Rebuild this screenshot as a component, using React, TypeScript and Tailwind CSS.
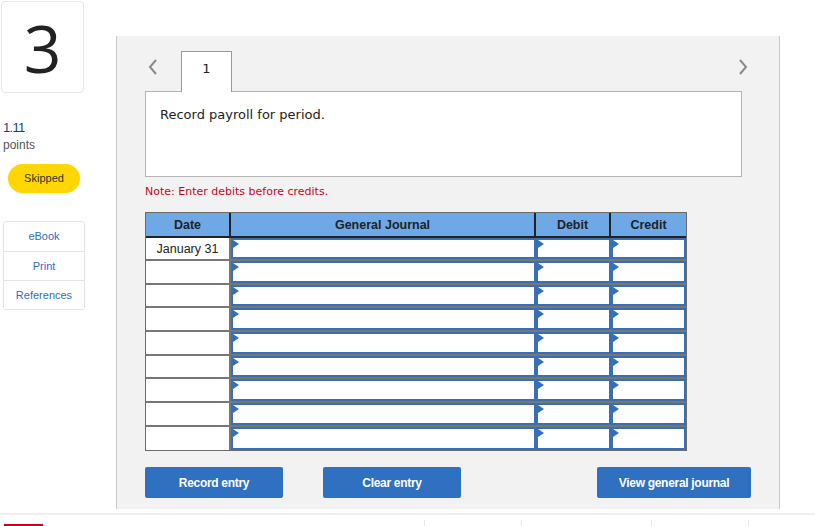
import { ReactNode } from "react";

const ROWS = 9;

function Tri() {
  return (
    <span className="absolute left-0 top-0 h-0 w-0 border-y-[4px] border-l-[6px] border-y-transparent border-l-[#2f6fc0]" />
  );
}

function InputCell() {
  return (
    <div className="relative border-2 border-[#3a6fb5] bg-white">
      <Tri />
    </div>
  );
}

function Button({ children, className }: { children: ReactNode; className: string }) {
  return (
    <button
      className={`h-[31px] rounded-[2px] bg-[#2f70c1] text-[12px] font-bold tracking-[-0.3px] text-white ${className}`}
      style={{ fontFamily: '"Liberation Sans", Arial, sans-serif' }}
    >
      {children}
    </button>
  );
}

export default function App() {
  return (
    <div className="relative h-[526px] w-[815px] overflow-hidden bg-white" style={{ fontFamily: '"Liberation Sans", Arial, sans-serif' }}>
      <div className="flex">
        {/* sidebar */}
        <aside className="w-[116px] shrink-0 pt-[1px]">
          <div className="ml-[1px] flex h-[92px] w-[83px] items-center justify-center rounded-[4px] border border-[#e6e6e6]">
            <span className="text-[66px] leading-none text-[#222]" style={{ fontFamily: '"Open Sans", sans-serif', fontWeight: 400 }}>3</span>
          </div>
          <div className="mt-[27px] pl-[3px] text-[13px] leading-[16px] tracking-[-0.7px] text-[#1a3c8a]">1.11</div>
          <div className="pl-[3px] text-[12px] leading-[18px] text-[#555]">points</div>
          <div className="ml-[8px] mt-[10px] flex h-[29px] w-[72px] items-center justify-center rounded-full bg-[#ffd600] text-[11px] text-[#333]">
            Skipped
          </div>
          <div className="ml-[3px] mt-[28px] w-[82px] rounded-[3px] border border-[#e4e4e4] text-[11px] text-[#2e6dc0]">
            <div className="flex h-[30px] items-center justify-center border-b border-[#e4e4e4]">eBook</div>
            <div className="flex h-[29px] items-center justify-center border-b border-[#e4e4e4]">Print</div>
            <div className="flex h-[28px] items-center justify-center">References</div>
          </div>
        </aside>

        {/* main panel */}
        <main className="mt-[36px] h-[473px] w-[664px] border-x border-[#c8c8c8] bg-[#f2f2f2] pl-[28px]">
          <div className="flex h-[55px] items-end">
            <div className="flex h-[40px] w-[36px] items-start pl-[2px] pt-[7px]">
              <svg width="12" height="18" viewBox="0 0 12 18"><path d="M9 2 L3 9 L9 16" fill="none" stroke="#8a8a8a" strokeWidth="2" /></svg>
            </div>
            <div className="relative z-10 -mb-px flex h-[41px] w-[51px] justify-center border border-b-0 border-[#999] bg-white pt-[7px] text-[13px] text-[#222]" style={{ fontFamily: '"DejaVu Sans", Verdana, sans-serif' }}>
              1
            </div>
            <div className="ml-auto mr-[30px] flex h-[40px] items-start pt-[7px]">
              <svg width="12" height="18" viewBox="0 0 12 18"><path d="M3 2 L9 9 L3 16" fill="none" stroke="#8a8a8a" strokeWidth="2" /></svg>
            </div>
          </div>
          <div className="h-[86px] w-[597px] border border-[#b5b5b5] bg-white px-[14px] pt-[13px] text-[13px] text-[#222]" style={{ fontFamily: '"DejaVu Sans", Verdana, sans-serif' }}>
            Record payroll for period.
          </div>
          <div className="mt-[7px] text-[11px] text-[#d0021b]" style={{ fontFamily: '"DejaVu Sans", Verdana, sans-serif' }}>
            Note: Enter debits before credits.
          </div>

          <div className="mt-[11px] w-[542px] border border-[#6b6b6b] bg-white">
            <div className="grid h-[25px] grid-cols-[85px_305px_75px_1fr] border-b-2 border-[#222] bg-[#6fa8e7] text-[12.5px] font-bold text-[#222]">
              <div className="flex items-center justify-center border-r-2 border-[#222] pt-[2px]">Date</div>
              <div className="flex items-center justify-center border-r-2 border-[#222] pt-[2px]">General Journal</div>
              <div className="flex items-center justify-center border-r-2 border-[#222] pt-[2px]">Debit</div>
              <div className="flex items-center justify-center pt-[2px]">Credit</div>
            </div>
            {Array.from({ length: ROWS }).map((_, i) => (
              <div key={i} className={`grid h-[23.67px] grid-cols-[85px_305px_75px_1fr] ${i < ROWS - 1 ? "border-b-2 border-[#777]" : ""}`}>
                <div className="flex items-center justify-center border-r-2 border-[#777] pt-[2px] text-[12.5px] text-[#222]">
                  {i === 0 ? "January 31" : ""}
                </div>
                <InputCell />
                <InputCell />
                <InputCell />
              </div>
            ))}
          </div>

          <div className="mt-[16px] flex w-[606px]">
            <Button className="w-[138px]">Record entry</Button>
            <Button className="ml-[40px] w-[138px]">Clear entry</Button>
            <Button className="ml-auto w-[154px]">View general journal</Button>
          </div>
        </main>
      </div>

      {/* footer strip */}
      <div className="absolute left-0 top-[513px] h-[2px] w-full bg-[#efefef]" />
      <div className="absolute left-[4px] top-[524px] h-[2px] w-[39px] bg-[#d0021b]" />
      <div className="absolute left-[424px] top-[520px] h-[6px] w-px bg-[#e6e6e6]" />
      <div className="absolute left-[521px] top-[520px] h-[6px] w-px bg-[#e6e6e6]" />
      <div className="absolute left-[651px] top-[520px] h-[6px] w-px bg-[#e6e6e6]" />
      <div className="absolute left-[748px] top-[520px] h-[6px] w-px bg-[#e6e6e6]" />
    </div>
  );
}
